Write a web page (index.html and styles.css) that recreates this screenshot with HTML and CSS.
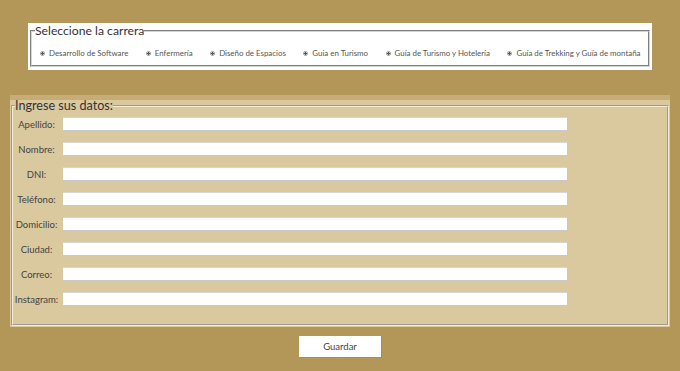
FILE: index.html
```html
<!DOCTYPE html>
<html lang="es">
<head>
<meta charset="utf-8">
<title>Inscripción</title>
<link rel="stylesheet" href="styles.css">
</head>
<body>
<div class="top">
  <fieldset class="carrera">
    <legend>Seleccione la carrera</legend>
    <div class="opts">
      <label class="opt"><span class="radio"></span>Desarrollo de Software</label>
      <label class="opt"><span class="radio"></span>Enfermería</label>
      <label class="opt"><span class="radio"></span>Diseño de Espacios</label>
      <label class="opt"><span class="radio"></span>Guia en Turismo</label>
      <label class="opt"><span class="radio"></span>Guía de Turismo y Hotelería</label>
      <label class="opt"><span class="radio"></span>Guía de Trekking y Guía de montaña</label>
    </div>
  </fieldset>
</div>

<div class="datos">
  <fieldset class="form">
    <legend>Ingrese sus datos:</legend>
    <div class="grid">
      <span class="lbl">Apellido:</span><span class="inp"></span>
      <span class="lbl">Nombre:</span><span class="inp"></span>
      <span class="lbl">DNI:</span><span class="inp"></span>
      <span class="lbl">Teléfono:</span><span class="inp"></span>
      <span class="lbl">Domicilio:</span><span class="inp"></span>
      <span class="lbl">Ciudad:</span><span class="inp"></span>
      <span class="lbl">Correo:</span><span class="inp"></span>
      <span class="lbl">Instagram:</span><span class="inp"></span>
    </div>
  </fieldset>
</div>

<div class="actions">
  <button class="btn">Guardar</button>
</div>
</body>
</html>
```

FILE: styles.css
```css
* { box-sizing: border-box; }
html, body { margin: 0; padding: 0; }
body {
  background: #b39758;
  width: 680px;
  height: 371px;
  overflow: hidden;
  font-family: Lato, "Open Sans", "Liberation Sans", sans-serif;
  color: #444;
}
.top {
  margin: 23px 0 0 28px;
  width: 624px;
  height: 47px;
  background: #fff;
  padding: 0 2px 3px 2px;
}
.carrera {
  margin: 0;
  height: 44px;
  border: 2px groove #d4d4d4;
  padding: 0 0 0 8px;
}
.carrera legend {
  padding: 0;
  margin-left: -5px;
  font-size: 12.2px;
  line-height: 16px;
  color: #333;
}
.opts {
  display: flex;
  gap: 17.5px;
  margin-top: 9px;
}
.opt {
  display: flex;
  align-items: center;
  gap: 4px;
  font-size: 7.9px;
  color: #555;
  white-space: nowrap;
}
.radio {
  width: 5px;
  height: 5px;
  border-radius: 50%;
  border: 1px solid #999;
  background: radial-gradient(circle, #555 0 1px, #fff 1.2px);
}
.datos {
  margin: 25px 0 0 10px;
  width: 660px;
  height: 232px;
  background: #dac89e;
  border-top: 5px solid #c6ad77;
  padding: 0 1px 1px 1px;
}
.form {
  margin: 0;
  height: 226px;
  border: 2px groove #f4ecd6;
  padding: 0;
}
.form legend {
  padding: 0;
  margin-left: 2px;
  font-size: 12.6px;
  line-height: 12px;
  color: #333;
}
.grid {
  display: grid;
  grid-template-columns: 47px 504px;
  column-gap: 3px;
  row-gap: 11px;
  margin-top: 5px;
  align-items: center;
}
.lbl {
  font-size: 9.5px;
  text-align: center;
  color: #444;
}
.inp {
  height: 14px;
  background: #fff;
  border-top: 1px solid #d6d6d6;
  border-bottom: 1px solid #c8c8c8;
}
.actions {
  display: flex;
  justify-content: center;
  margin-top: 9px;
}
.btn {
  width: 82px;
  height: 21px;
  background: #fff;
  border: none;
  box-shadow: 1px 1px 0 #8f8f8f;
  font-family: Lato, "Open Sans", "Liberation Sans", sans-serif;
  font-size: 9.5px;
  color: #444;
  padding: 0;
}
```
